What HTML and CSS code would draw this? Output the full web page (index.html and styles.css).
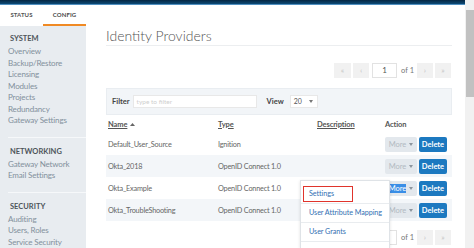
FILE: index.html
```html
<!DOCTYPE html>
<html>
<head>
<meta charset="utf-8">
<link rel="stylesheet" href="styles.css">
</head>
<body>
<div class="page">
  <div class="app">
    <div class="topbar"></div>
    <div class="tabs">
      <div class="tab">STATUS</div>
      <div class="tab active">CONFIG</div>
    </div>
    <div class="body">
      <nav class="sidebar">
        <div class="section first">
          <div class="sec-title">SYSTEM</div>
          <div class="item">Overview</div>
          <div class="item">Backup/Restore</div>
          <div class="item">Licensing</div>
          <div class="item">Modules</div>
          <div class="item">Projects</div>
          <div class="item">Redundancy</div>
          <div class="item">Gateway Settings</div>
        </div>
        <div class="section">
          <div class="sec-title">NETWORKING</div>
          <div class="item">Gateway Network</div>
          <div class="item">Email Settings</div>
        </div>
        <div class="section last">
          <div class="sec-title">SECURITY</div>
          <div class="item">Auditing</div>
          <div class="item">Users, Roles</div>
          <div class="item">Service Security</div>
        </div>
      </nav>
      <main class="main">
        <h1 class="title">Identity Providers</h1>
        <div class="pager">
          <span class="pbtn">&laquo;</span>
          <span class="pbtn">&lsaquo;</span>
          <span class="pinput">1</span>
          <span class="pof">of 1</span>
          <span class="pbtn">&rsaquo;</span>
          <span class="pbtn">&raquo;</span>
        </div>
        <div class="filter">
          <span class="flabel">Filter</span>
          <span class="finput">type to filter</span>
          <span class="flabel view">View</span>
          <span class="fselect">20<span class="caret-down"></span></span>
        </div>
        <table class="grid">
          <colgroup><col class="c1"><col class="c2"><col class="c3"><col class="c4"></colgroup>
          <thead>
            <tr>
              <th><span class="sort">Name</span> <svg class="up" width="5" height="3" viewBox="0 0 5 3"><path d="M0 3 L2.5 0 L5 3 Z" fill="#666"/></svg></th>
              <th><span class="sort">Type</span></th>
              <th><span class="sort">Description</span></th>
              <th>Action</th>
            </tr>
          </thead>
          <tbody>
            <tr>
              <td>Default_User_Source</td><td>Ignition</td><td></td>
              <td class="act"><span class="more">More<span class="caret-down"></span></span><span class="del">Delete</span></td>
            </tr>
            <tr class="alt">
              <td>Okta_2018</td><td>OpenID Connect 1.0</td><td></td>
              <td class="act"><span class="more">More<span class="caret-down"></span></span><span class="del">Delete</span></td>
            </tr>
            <tr>
              <td>Okta_Example</td><td>OpenID Connect 1.0</td><td></td>
              <td class="act"><span class="more"><span class="sel">More</span><span class="caret-down"></span></span><span class="del">Delete</span></td>
            </tr>
            <tr class="alt">
              <td>Okta_TroubleShooting</td><td>OpenID Connect 1.0</td><td></td>
              <td class="act"><span class="more">More<span class="caret-down"></span></span><span class="del">Delete</span></td>
            </tr>
          </tbody>
        </table>
        <div class="pager bottom">
          <span class="pbtn covered">&laquo;</span>
          <span class="pbtn covered">&lsaquo;</span>
          <span class="pinput"><span class="covered">1</span></span>
          <span class="pof">of 1</span>
          <span class="pbtn">&rsaquo;</span>
          <span class="pbtn">&raquo;</span>
        </div>
        <div class="menu">
          <div class="mitem"><span class="mark">Settings</span></div>
          <div class="mitem">User Attribute Mapping</div>
          <div class="mitem">User Grants</div>
        </div>
      </main>
    </div>
  </div>
  <div class="scrollbar"><div class="thumb"></div></div>
</div>
</body>
</html>
```
FILE: styles.css
```css
* { box-sizing: border-box; }
html, body { margin: 0; padding: 0; }
body {
  width: 474px;
  height: 248px;
  overflow: hidden;
  background: #fff;
  font-family: Lato, "Open Sans", sans-serif;
  color: #555;
}
.page { display: flex; width: 474px; height: 248px; overflow: hidden; }
.app { width: 465px; display: flex; flex-direction: column; }
.topbar {
  height: 5px;
  background: linear-gradient(#042642, #0c4a76);
  border-bottom: 1px solid #4f8fc0;
}
.tabs { display: flex; height: 21px; background: #fff; }
.tab {
  width: 43px;
  height: 21px;
  line-height: 19px;
  text-align: center;
  font-size: 6px;
  font-weight: 700;
  color: #555;
  letter-spacing: 0.1px;
  border-bottom: 2px solid transparent;
}
.tab.active { border-bottom-color: #f08a24; color: #4a4a4a; }
.body { flex: 1; display: flex; min-height: 0; }
.sidebar {
  width: 86px;
  background: #e8ecf0;
  padding: 0 0 0 8px;
}
.section {
  padding: 8px 0 10px;
  border-bottom: 1px solid #f6f8fa;
}
.section.first { padding-top: 7px; }
.section.last { border-bottom: none; }
.sec-title {
  font-size: 7.5px;
  font-weight: 700;
  color: #4e545a;
  line-height: 11.5px;
  margin-bottom: 1.5px;
  padding-left: 2px;
}
.item {
  font-size: 8px;
  letter-spacing: -0.15px;
  line-height: 11.5px;
  color: #82909c;
  white-space: nowrap;
}
.main {
  flex: 1;
  position: relative;
  padding: 0 13px 0 20px;
}
.title {
  margin: 1px 0 0;
  font-size: 14px;
  font-weight: 300;
  line-height: 18px;
  color: #555;
  border-bottom: 1px solid #eceef0;
}
.pager {
  display: flex;
  justify-content: flex-end;
  align-items: center;
  gap: 2px;
  margin-top: 17px;
  padding-right: 1px;
  height: 15px;
}
.pager.bottom { margin-top: 9px; }
.pbtn {
  width: 16px;
  height: 15px;
  background: #f1f1f1;
  color: #c4c4c4;
  font-size: 8px;
  line-height: 15px;
  text-align: center;
}
.pbtn:first-child { width: 17px; }
.covered { visibility: hidden; }
.pinput {
  width: 25px;
  height: 15px;
  border: 1px solid #e2e2e2;
  background: #fff;
  font-size: 8px;
  line-height: 13px;
  text-align: center;
  color: #555;
  margin-left: 1px;
}
.pof { font-size: 7.5px; color: #777; margin: 0 1px 0 2px; }
.filter {
  margin-top: 10px;
  height: 27px;
  background: #f2f5f8;
  border: 1px solid #e9edf1;
  display: flex;
  align-items: center;
  padding-left: 5px;
}
.flabel { font-size: 7.5px; font-weight: 700; color: #444; }
.finput {
  margin-left: 3px;
  width: 124px;
  height: 13px;
  background: #fff;
  border: 1px solid #e8e8e8;
  font-size: 6.5px;
  line-height: 11px;
  color: #cfcfcf;
  padding-left: 3px;
}
.flabel.view { margin-left: 10px; }
.fselect {
  margin-left: 6px;
  width: 28px;
  height: 13px;
  background: #fff;
  border: 1px solid #e8e8e8;
  font-size: 7px;
  line-height: 11px;
  color: #555;
  padding-left: 3px;
  display: flex;
  align-items: center;
}
.fselect .caret-down { margin-left: auto; margin-right: 4px; border-top-color: #777; }
.caret-down {
  display: inline-block;
  width: 0; height: 0;
  border-left: 2.5px solid transparent;
  border-right: 2.5px solid transparent;
  border-top: 3px solid #999;
  vertical-align: middle;
}
.grid {
  width: 100%;
  border-collapse: collapse;
  table-layout: fixed;
  font-size: 7.3px;
  letter-spacing: -0.2px;
}
.grid col.c1 { width: 110px; }
.grid col.c2 { width: 99px; }
.grid col.c3 { width: 68px; }
.grid col.c4 { width: 69px; }
.grid th {
  height: 18px;
  text-align: left;
  font-weight: 700;
  font-size: 7.5px;
  letter-spacing: -0.1px;
  color: #555;
  padding: 0 0 0 2px;
  vertical-align: middle;
  white-space: nowrap;
}
.sort { text-decoration: underline; text-underline-offset: 1px; }
.up { vertical-align: middle; margin-left: 1px; }
.grid td {
  height: 22px;
  padding: 0 0 0 2px;
  color: #666;
  vertical-align: middle;
  white-space: nowrap;
}
.grid tr.alt td { background: #f3f6f9; }
.grid td.act { padding-left: 1px; letter-spacing: 0; }
.more {
  display: inline-flex;
  align-items: center;
  justify-content: center;
  gap: 3px;
  width: 32px;
  height: 15px;
  background: #e3e8ed;
  color: #b2bac2;
  font-size: 7.5px;
  border-radius: 2px;
  vertical-align: middle;
  margin-left: 1px;
}
.more .caret-down { border-top-color: #8c959e; }
.sel { background: #3a8ee6; color: #fff; }
.del {
  display: inline-block;
  width: 28px;
  height: 15px;
  line-height: 15px;
  text-align: center;
  background: #1c79c0;
  color: #fff;
  font-size: 7.5px;
  font-weight: 700;
  border-radius: 2px;
  vertical-align: middle;
  margin-left: 2px;
}
.menu {
  position: absolute;
  left: 214px;
  top: 154px;
  width: 90px;
  height: 68px;
  background: #fff;
  border: 1px solid #dfe3e7;
  border-bottom: none;
  box-shadow: 0 1px 3px rgba(0,0,0,0.12);
  padding-top: 4px;
}
.mitem {
  height: 19px;
  line-height: 18px;
  border-bottom: 1px solid #e9ecef;
  padding-left: 8px;
  font-size: 7.2px;
  letter-spacing: -0.05px;
  color: #3471b3;
  white-space: nowrap;
}
.mark {
  display: inline-block;
  margin-left: -6px;
  padding: 0 18px 0 5px;
  height: 16px;
  line-height: 14px;
  border: 1.5px solid #e0342c;
}
.scrollbar {
  width: 9px;
  background: #f1f1f1;
  padding-top: 10px;
  padding-left: 1px;
}
.thumb { width: 8px; height: 87px; background: #c1c1c1; }
```
